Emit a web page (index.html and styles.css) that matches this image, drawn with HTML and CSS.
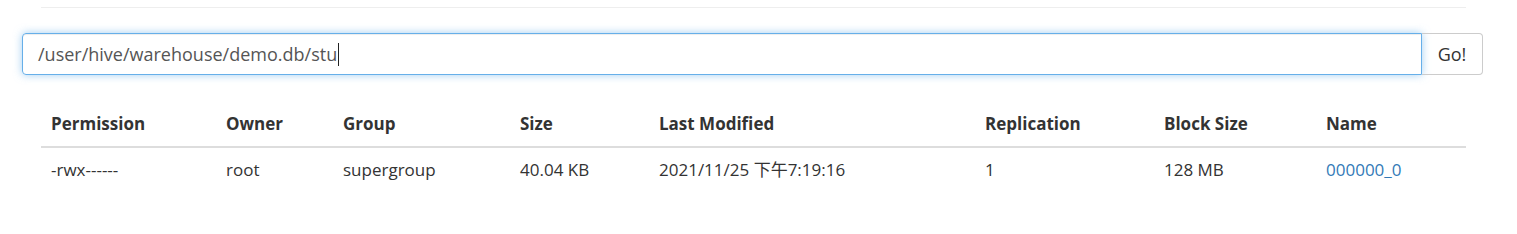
FILE: index.html
```html
<!DOCTYPE html>
<html lang="en">
<head>
    <meta charset="UTF-8">
    <title>Browse Directory</title>
    <link rel="stylesheet" href="styles.css">
</head>
<body>
    <div class="page">
        <hr class="topRule">
        <div class="inputGroup">
            <div class="pathInput"><span class="pathText">/user/hive/warehouse/demo.db/stu</span><span class="caret"></span></div>
            <span class="goBtn">Go!</span>
        </div>
        <table class="fileTable">
            <colgroup>
                <col class="cPerm">
                <col class="cOwner">
                <col class="cGroup">
                <col class="cSize">
                <col class="cMod">
                <col class="cRep">
                <col class="cBlock">
                <col class="cName">
            </colgroup>
            <thead>
                <tr>
                    <th>Permission</th>
                    <th>Owner</th>
                    <th>Group</th>
                    <th>Size</th>
                    <th>Last Modified</th>
                    <th>Replication</th>
                    <th>Block Size</th>
                    <th>Name</th>
                </tr>
            </thead>
            <tbody>
                <tr>
                    <td>-rwx------</td>
                    <td>root</td>
                    <td>supergroup</td>
                    <td>40.04 KB</td>
                    <td>2021/11/25 下午7:19:16</td>
                    <td>1</td>
                    <td>128 MB</td>
                    <td><a href="#">000000_0</a></td>
                </tr>
            </tbody>
        </table>
    </div>
</body>
</html>
```

FILE: styles.css
```css
* {
    padding: 0;
    margin: 0;
    box-sizing: border-box;
}

body {
    font-family: "Open Sans", "Noto Sans CJK SC", sans-serif;
    font-size: 17px;
    color: #333;
    background: #fff;
}

.page {
    padding-top: 7px;
}

.topRule {
    border: 0;
    border-top: 1px solid #eee;
    margin: 0 51px 0 41px;
}

.inputGroup {
    display: flex;
    margin: 25px 34px 0 22px;
    height: 42px;
}

.pathInput {
    flex: 1;
    display: flex;
    align-items: center;
    padding: 0 15px;
    border: 1px solid #66afe9;
    border-radius: 4px 0 0 4px;
    box-shadow: inset 0 1px 1px rgba(0, 0, 0, .075), 0 0 8px rgba(102, 175, 233, .6);
    font-size: 18px;
    color: #555;
}

.pathInput .caret {
    display: inline-block;
    width: 1px;
    height: 23px;
    margin-left: 1px;
    background: #222;
}

.goBtn {
    width: 61px;
    display: flex;
    align-items: center;
    justify-content: center;
    border: 1px solid #ccc;
    border-left: 0;
    border-radius: 0 4px 4px 0;
    font-size: 18px;
    color: #333;
}

.fileTable {
    margin: 27px 51px 0 41px;
    width: 1425px;
    border-collapse: collapse;
    table-layout: fixed;
}

.fileTable th,
.fileTable td {
    text-align: left;
    padding: 10px;
    line-height: 24px;
}

.fileTable th {
    font-weight: bold;
    border-bottom: 2px solid #ddd;
}

.fileTable a {
    color: #337ab7;
    text-decoration: none;
}

.cPerm { width: 175px; }
.cOwner { width: 117px; }
.cGroup { width: 177px; }
.cSize { width: 139px; }
.cMod { width: 326px; }
.cRep { width: 179px; }
.cBlock { width: 162px; }
.cName { width: 150px; }
```
